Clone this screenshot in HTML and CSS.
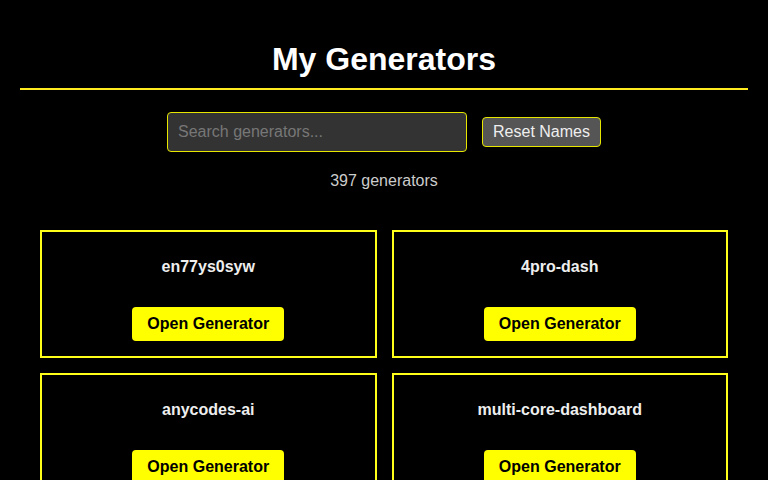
FILE: index.html
```html
<!DOCTYPE html>
<html lang="en">
<head>
  <meta charset="UTF-8" />
  <meta name="viewport" content="width=device-width, initial-scale=1.0"/>
  <title>My Generators</title>
  <link rel="stylesheet" href="styles.css">
</head>
<body>
  <header class="page-header">
    <h1>My Generators</h1>
  </header>

  <div class="controls">
    <input type="text" class="search-input" placeholder="Search generators..." />
    <button class="reset-btn">Reset Names</button>
  </div>

  <div class="count">397 generators</div>

  <div class="generator-grid">
    <div class="generator-card">
      <h3 class="generator-name">en77ys0syw</h3>
      <a href="#" class="open-btn">Open Generator</a>
    </div>
    <div class="generator-card">
      <h3 class="generator-name">4pro-dash</h3>
      <a href="#" class="open-btn">Open Generator</a>
    </div>
    <div class="generator-card">
      <h3 class="generator-name">anycodes-ai</h3>
      <a href="#" class="open-btn">Open Generator</a>
    </div>
    <div class="generator-card">
      <h3 class="generator-name">multi-core-dashboard</h3>
      <a href="#" class="open-btn">Open Generator</a>
    </div>
  </div>
</body>
</html>
```

FILE: styles.css
```css
body {
  margin: 0;
  padding: 20px;
  background-color: #000;
  color: #eee;
  font-family: "Liberation Sans", Arial, sans-serif;
}

.page-header {
  text-align: center;
  padding-bottom: 10px;
  border-bottom: 2px solid #ffeb1f;
}

.page-header h1 {
  margin: 21px 0 0;
  font-size: 32px;
  color: #fff;
}

.controls {
  display: flex;
  justify-content: center;
  align-items: center;
  gap: 15px;
  margin-top: 22px;
}

.search-input {
  width: 300px;
  height: 40px;
  box-sizing: border-box;
  padding: 8px 10px;
  font-family: inherit;
  font-size: 16px;
  color: #eee;
  background-color: #333;
  border: 1px solid #e6e600;
  border-radius: 4px;
}

.search-input::placeholder {
  color: #777;
}

.reset-btn {
  height: 30px;
  padding: 0 10px;
  font-family: inherit;
  font-size: 16px;
  color: #eee;
  background-color: #555;
  border: 1px solid #e6e600;
  border-radius: 4px;
  cursor: pointer;
}

.count {
  text-align: center;
  color: #ccc;
  font-size: 16px;
  margin-top: 20px;
}

.generator-grid {
  display: grid;
  grid-template-columns: 1fr 1fr;
  gap: 15px;
  padding: 0 20px;
  margin-top: 40px;
}

.generator-card {
  border: 2px solid #ffff1a;
  padding: 26px 20px 15px;
  text-align: center;
}

.generator-name {
  margin: 0 0 31px;
  font-size: 16px;
  color: #eee;
}

.open-btn {
  display: inline-block;
  padding: 8px 15px;
  background-color: #ffff00;
  color: #000;
  font-weight: bold;
  font-size: 16px;
  text-decoration: none;
  border-radius: 4px;
}
```
